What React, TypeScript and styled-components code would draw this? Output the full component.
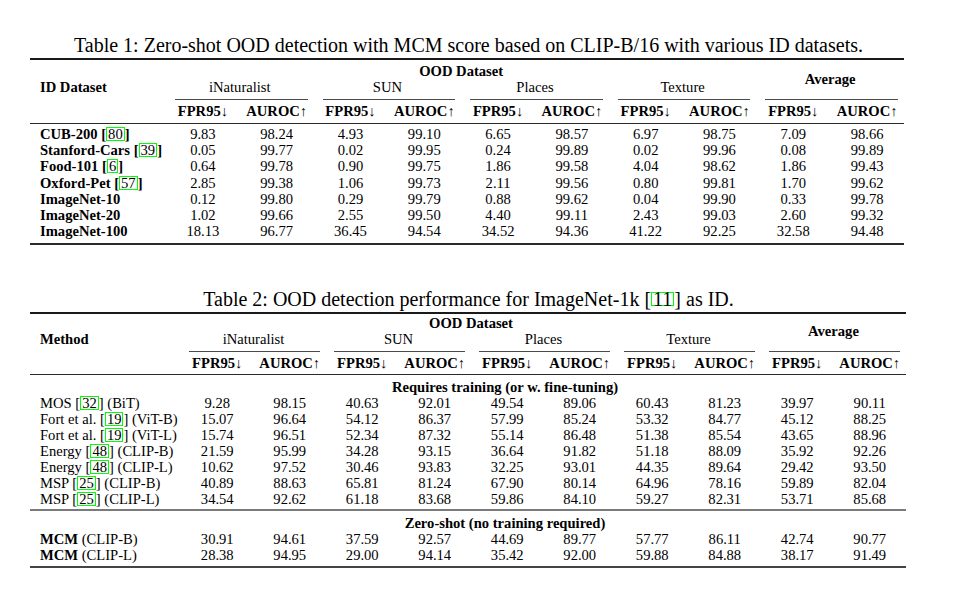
import React from "react";
import styled, { createGlobalStyle } from "styled-components";

const GlobalStyle = createGlobalStyle`
  body {
    margin: 0;
    background: #fff;
    color: #000;
    font-family: "Liberation Serif", "Times New Roman", serif;
  }
`;

const Page = styled.div`
  padding: 33px 0 0 30px;
`;

const Block = styled.div<{ $gap?: number }>`
  width: 877px;
  margin-top: ${(p) => p.$gap ?? 0}px;
`;

const Caption = styled.div`
  font-size: 20px;
  line-height: 24px;
  text-align: center;
  margin-bottom: 1px;
  white-space: nowrap;
`;

const Grid = styled.div<{ $cols: string; $lh: number }>`
  display: grid;
  grid-template-columns: ${(p) => p.$cols};
  font-size: 14.6px;
  line-height: ${(p) => p.$lh}px;
  white-space: nowrap;
`;

const Rule = styled.div<{ $h: number; $color: string; $mt?: number }>`
  grid-column: 1 / -1;
  height: ${(p) => p.$h}px;
  background: ${(p) => p.$color};
  margin-top: ${(p) => p.$mt ?? 0}px;
`;

const HeadCell = styled.div<{ $span?: number; $bold?: boolean; $pad: string; $left?: boolean }>`
  grid-column: span ${(p) => p.$span ?? 1};
  padding: ${(p) => p.$pad};
  line-height: 16px;
  font-weight: ${(p) => (p.$bold ? 700 : 400)};
  text-align: ${(p) => (p.$left ? "left" : "center")};
  padding-left: ${(p) => (p.$left ? "10px" : undefined)};
`;

// group label with a trimmed rule under it (like \cmidrule(lr))
const GroupCell = styled.div<{ $trim: [number, number]; $bold?: boolean; $rows?: number; $pt: number }>`
  grid-column: span 2;
  grid-row: span ${(p) => p.$rows ?? 1};
  display: flex;
  align-items: center;
  justify-content: center;
  padding: ${(p) => p.$pt}px 0 5px;
  line-height: 16px;
  font-weight: ${(p) => (p.$bold ? 700 : 400)};
  background: linear-gradient(#4a4a4a, #4a4a4a) no-repeat;
  background-size: calc(100% - ${(p) => p.$trim[0] + p.$trim[1]}px) 1px;
  background-position: ${(p) => p.$trim[0]}px 100%;
`;

const NameCell = styled.div<{ $bold?: boolean }>`
  padding-left: 10px;
  font-weight: ${(p) => (p.$bold ? 700 : 400)};
`;

const Num = styled.div`
  text-align: center;
`;

const Section = styled.div<{ $mt: number }>`
  grid-column: 1 / -1;
  margin-top: ${(p) => p.$mt}px;
  padding-left: 74px;
  text-align: center;
  font-weight: 700;
  line-height: 16px;
`;

const Cite = styled.span`
  display: inline-block;
  border: 1px solid #00ff00;
  padding: 0 1px;
  line-height: 12px;
  font-weight: 400;
`;

const Strong = styled.span`
  font-weight: 700;
`;

const groups = ["iNaturalist", "SUN", "Places", "Texture"];

type Row = { name: React.ReactNode; vals: string[] };

const cite = (n: string) => (
  <>
    [<Cite>{n}</Cite>]
  </>
);

const table1: Row[] = [
  { name: <>CUB-200 {cite("80")}</>, vals: "9.83 98.24 4.93 99.10 6.65 98.57 6.97 98.75 7.09 98.66".split(" ") },
  { name: <>Stanford-Cars {cite("39")}</>, vals: "0.05 99.77 0.02 99.95 0.24 99.89 0.02 99.96 0.08 99.89".split(" ") },
  { name: <>Food-101 {cite("6")}</>, vals: "0.64 99.78 0.90 99.75 1.86 99.58 4.04 98.62 1.86 99.43".split(" ") },
  { name: <>Oxford-Pet {cite("57")}</>, vals: "2.85 99.38 1.06 99.73 2.11 99.56 0.80 99.81 1.70 99.62".split(" ") },
  { name: "ImageNet-10", vals: "0.12 99.80 0.29 99.79 0.88 99.62 0.04 99.90 0.33 99.78".split(" ") },
  { name: "ImageNet-20", vals: "1.02 99.66 2.55 99.50 4.40 99.11 2.43 99.03 2.60 99.32".split(" ") },
  { name: "ImageNet-100", vals: "18.13 96.77 36.45 94.54 34.52 94.36 41.22 92.25 32.58 94.48".split(" ") },
];

const trained: Row[] = [
  { name: <>MOS {cite("32")} (BiT)</>, vals: "9.28 98.15 40.63 92.01 49.54 89.06 60.43 81.23 39.97 90.11".split(" ") },
  { name: <>Fort et al. {cite("19")} (ViT-B)</>, vals: "15.07 96.64 54.12 86.37 57.99 85.24 53.32 84.77 45.12 88.25".split(" ") },
  { name: <>Fort et al. {cite("19")} (ViT-L)</>, vals: "15.74 96.51 52.34 87.32 55.14 86.48 51.38 85.54 43.65 88.96".split(" ") },
  { name: <>Energy {cite("48")} (CLIP-B)</>, vals: "21.59 95.99 34.28 93.15 36.64 91.82 51.18 88.09 35.92 92.26".split(" ") },
  { name: <>Energy {cite("48")} (CLIP-L)</>, vals: "10.62 97.52 30.46 93.83 32.25 93.01 44.35 89.64 29.42 93.50".split(" ") },
  { name: <>MSP {cite("25")} (CLIP-B)</>, vals: "40.89 88.63 65.81 81.24 67.90 80.14 64.96 78.16 59.89 82.04".split(" ") },
  { name: <>MSP {cite("25")} (CLIP-L)</>, vals: "34.54 92.62 61.18 83.68 59.86 84.10 59.27 82.31 53.71 85.68".split(" ") },
];

const zeroShot: Row[] = [
  { name: <><Strong>MCM</Strong> (CLIP-B)</>, vals: "30.91 94.61 37.59 92.57 44.69 89.77 57.77 86.11 42.74 90.77".split(" ") },
  { name: <><Strong>MCM</Strong> (CLIP-L)</>, vals: "28.38 94.95 29.00 94.14 35.42 92.00 59.88 84.88 38.17 91.49".split(" ") },
];

function Header({ first, trim, ptA, ptC, pbC }: { first: string; trim: [number, number]; ptA: number; ptC: number; pbC: number }) {
  return (
    <>
      <HeadCell $pad={`${ptA}px 0 0`} />
      <HeadCell $span={8} $bold $pad={`${ptA}px 0 0`}>OOD Dataset</HeadCell>
      <GroupCell $trim={trim} $bold $rows={2} $pt={ptA}>Average</GroupCell>
      <HeadCell $bold $left $pad="0 0 5px">{first}</HeadCell>
      {groups.map((g) => (
        <GroupCell key={g} $trim={trim} $pt={0}>{g}</GroupCell>
      ))}
      <HeadCell $pad={`${ptC}px 0 ${pbC}px`} />
      {Array.from({ length: 5 }).flatMap((_, i) => [
        <HeadCell key={"f" + i} $bold $pad={`${ptC}px 0 ${pbC}px`}>FPR95↓</HeadCell>,
        <HeadCell key={"a" + i} $bold $pad={`${ptC}px 0 ${pbC}px`}>AUROC↑</HeadCell>,
      ])}
    </>
  );
}

function Rows({ rows, bold }: { rows: Row[]; bold?: boolean }) {
  return (
    <>
      {rows.map((r, i) => (
        <React.Fragment key={i}>
          <NameCell $bold={bold}>{r.name}</NameCell>
          {r.vals.map((v, j) => (
            <Num key={j}>{v}</Num>
          ))}
        </React.Fragment>
      ))}
    </>
  );
}

export default function App() {
  return (
    <Page>
      <GlobalStyle />
      <Block>
        <Caption>Table 1: Zero-shot OOD detection with MCM score based on CLIP-B/16 with various ID datasets.</Caption>
        <Grid $cols="136px repeat(10, 73.8px)" $lh={16.2}>
          <Rule $h={1.5} $color="#1a1a1a" />
          <Header first="ID Dataset" trim={[9, 6]} ptA={3} ptC={3} pbC={4} />
          <Rule $h={1} $color="#2a2a2a" />
          <Rule $h={0} $color="transparent" $mt={2.5} />
          <Rows rows={table1} bold />
          <Rule $h={1.5} $color="#2a2a2a" $mt={4} />
        </Grid>
      </Block>
      <Block $gap={42.5}>
        <Caption>
          Table 2: OOD detection performance for ImageNet-1k [<Cite>11</Cite>] as ID.
        </Caption>
        <Grid $cols="151px repeat(10, 72.5px)" $lh={16}>
          <Rule $h={1.5} $color="#1a1a1a" />
          <Header first="Method" trim={[7.5, 6.5]} ptA={1.5} ptC={3} pbC={3} />
          <Rule $h={1} $color="#2a2a2a" />
          <Section $mt={3.5}>Requires training (or w. fine-tuning)</Section>
          <Rows rows={trained} />
          <Rule $h={2} $color="#7a7a7a" $mt={2.5} />
          <Section $mt={3.3}>Zero-shot (no training required)</Section>
          <Rows rows={zeroShot} />
          <Rule $h={1.5} $color="#444" $mt={3.5} />
        </Grid>
      </Block>
    </Page>
  );
}
